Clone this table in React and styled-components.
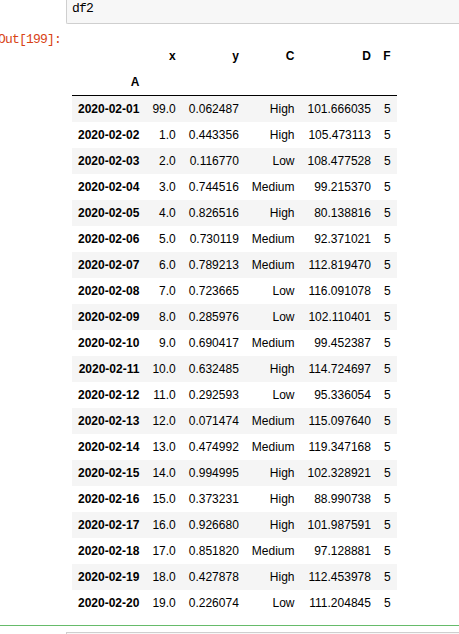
import React from 'react';
import styled, { createGlobalStyle } from 'styled-components';

const GlobalStyle = createGlobalStyle`
  html, body {
    margin: 0;
    padding: 0;
    background: #fff;
    overflow: hidden;
  }
`;

const Notebook = styled.div`
  width: 459px;
  height: 634px;
  overflow: hidden;
`;

// cell that scrolled partly off the top
const Cell = styled.div`
  padding-bottom: ${props => props.bottom || 0}px;
`;

const ActiveCell = styled.div`
  border-top: 1px solid #66bb6a;
  padding-top: 6px;
`;

const Row = styled.div`
  display: flex;
`;

const Prompt = styled.div`
  width: 66px;
  flex: none;
  box-sizing: border-box;
  padding: 8px 5px 0 0;
  display: flex;
  justify-content: flex-end;
  align-items: flex-start;
  font-family: "Liberation Mono", monospace;
  font-size: 13px;
  letter-spacing: -0.8px;
  line-height: 16px;
  color: #d84315;
  white-space: nowrap;
`;

const InputBox = styled.div`
  flex: 1;
  height: ${props => props.h}px;
  background: #f7f7f7;
  border: 1px solid #cfcfcf;
  border-top: ${props => (props.open ? 'none' : '1px solid #cfcfcf')};
  border-bottom: ${props => (props.open ? '1px solid #cfcfcf' : 'none')};
  border-right: none;
  border-radius: 0 0 0 2px;
  font-family: "Liberation Mono", monospace;
  font-size: 13px;
  letter-spacing: -0.8px;
  line-height: 18px;
  color: #000;
  padding-left: 5px;
  box-sizing: border-box;
`;

const OutputArea = styled.div`
  padding: 19px 0 0 6px;
`;

const Table = styled.table`
  border-collapse: collapse;
  border-spacing: 0;
  font-family: "Liberation Sans", Arial, sans-serif;
  font-size: 12px;
  color: #000;

  thead {
    border-bottom: 1px solid #000;
  }

  tbody tr:nth-child(odd) {
    background: #f5f5f5;
  }
`;

const Th = styled.th`
  padding: 6px;
  line-height: 14px;
  text-align: right;
  font-weight: bold;
  white-space: nowrap;
`;

const Td = styled.td`
  padding: 6px 6px 6px 7px;
  line-height: 14px;
  text-align: right;
  white-space: nowrap;
`;

const rows = [
  ['2020-02-01', '99.0', '0.062487', 'High', '101.666035'],
  ['2020-02-02', '1.0', '0.443356', 'High', '105.473113'],
  ['2020-02-03', '2.0', '0.116770', 'Low', '108.477528'],
  ['2020-02-04', '3.0', '0.744516', 'Medium', '99.215370'],
  ['2020-02-05', '4.0', '0.826516', 'High', '80.138816'],
  ['2020-02-06', '5.0', '0.730119', 'Medium', '92.371021'],
  ['2020-02-07', '6.0', '0.789213', 'Medium', '112.819470'],
  ['2020-02-08', '7.0', '0.723665', 'Low', '116.091078'],
  ['2020-02-09', '8.0', '0.285976', 'Low', '102.110401'],
  ['2020-02-10', '9.0', '0.690417', 'Medium', '99.452387'],
  ['2020-02-11', '10.0', '0.632485', 'High', '114.724697'],
  ['2020-02-12', '11.0', '0.292593', 'Low', '95.336054'],
  ['2020-02-13', '12.0', '0.071474', 'Medium', '115.097640'],
  ['2020-02-14', '13.0', '0.474992', 'Medium', '119.347168'],
  ['2020-02-15', '14.0', '0.994995', 'High', '102.328921'],
  ['2020-02-16', '15.0', '0.373231', 'High', '88.990738'],
  ['2020-02-17', '16.0', '0.926680', 'High', '101.987591'],
  ['2020-02-18', '17.0', '0.851820', 'Medium', '97.128881'],
  ['2020-02-19', '18.0', '0.427878', 'High', '112.453978'],
  ['2020-02-20', '19.0', '0.226074', 'Low', '111.204845'],
];

function DataFrame() {
  return (
    <Table>
      <thead>
        <tr>
          <Th></Th>
          <Th>x</Th>
          <Th>y</Th>
          <Th>C</Th>
          <Th>D</Th>
          <Th>F</Th>
        </tr>
        <tr>
          <Th>A</Th>
          <Th></Th>
          <Th></Th>
          <Th></Th>
          <Th></Th>
          <Th></Th>
        </tr>
      </thead>
      <tbody>
        {rows.map(r => (
          <tr key={r[0]}>
            <Th>{r[0]}</Th>
            <Td>{r[1]}</Td>
            <Td>{r[2]}</Td>
            <Td>{r[3]}</Td>
            <Td>{r[4]}</Td>
            <Td>5</Td>
          </tr>
        ))}
      </tbody>
    </Table>
  );
}

export default function App() {
  return (
    <Notebook>
      <GlobalStyle />
      <Cell bottom={9}>
        <Row>
          <Prompt />
          <InputBox h={24} open>df2</InputBox>
        </Row>
        <Row>
          <Prompt>Out[199]:</Prompt>
          <OutputArea>
            <DataFrame />
          </OutputArea>
        </Row>
      </Cell>
      <ActiveCell>
        <Row>
          <Prompt />
          <InputBox h={30} />
        </Row>
      </ActiveCell>
    </Notebook>
  );
}
